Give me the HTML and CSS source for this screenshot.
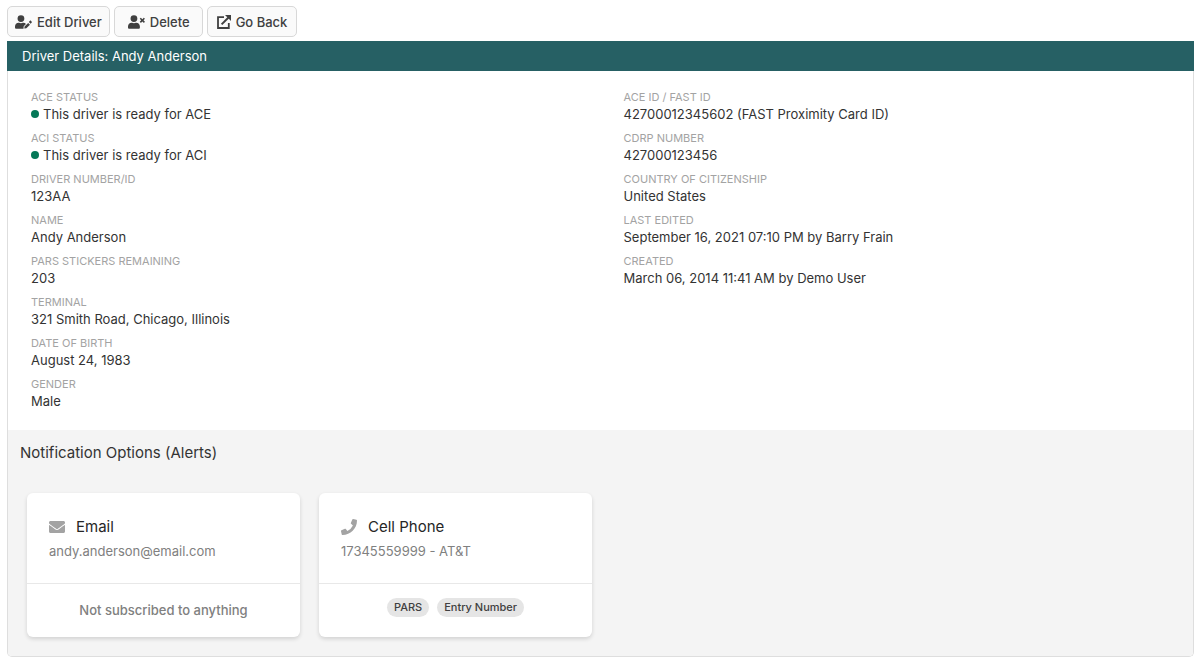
FILE: index.html
```html
<!DOCTYPE html>
<html lang="en">
<head>
    <meta charset="UTF-8">
    <meta name="viewport" content="width=device-width, initial-scale=1.0">
    <title>Driver Details</title>
    <link rel="stylesheet" href="styles.css">
</head>
<body>

    <!-- Toolbar -->
    <div class="toolbar">
        <button type="button" class="btn">
            <svg class="icon-user" viewBox="0 0 640 512" aria-hidden="true"><path d="M224 256a128 128 0 1 0 0-256 128 128 0 1 0 0 256zm90 32h-17a174 174 0 0 1-146 0h-17C60 288 0 348 0 422v42c0 27 21 48 48 48h277c-4-9-6-18-5-28l7-61 1-11 8-8 77-77c-24-24-59-39-99-39zm45 139l-7 61c-1 8 6 15 14 14l61-7 137-137-68-68-137 137zm271-185l-32-32c-10-10-26-10-36 0l-43 43 68 68 43-43c10-10 10-26 0-36z"/></svg>
            Edit Driver
        </button>
        <button type="button" class="btn btn-delete">
            <svg class="icon-user" viewBox="0 0 640 512" aria-hidden="true"><path d="M224 256a128 128 0 1 0 0-256 128 128 0 1 0 0 256zm90 32h-17a174 174 0 0 1-146 0h-17C60 288 0 348 0 422v42c0 27 21 48 48 48h352c27 0 48-21 48-48v-42c0-74-60-134-134-134zm270-96l46-46c6-6 6-13 0-19l-25-25c-6-6-13-6-19 0l-46 46-46-46c-6-6-13-6-19 0l-25 25c-6 6-6 13 0 19l46 46-46 46c-6 6-6 13 0 19l25 25c6 6 13 6 19 0l46-46 46 46c6 6 13 6 19 0l25-25c6-6 6-13 0-19z"/></svg>
            Delete
        </button>
        <button type="button" class="btn btn-back">
            <svg class="icon-square" viewBox="0 0 14 14" aria-hidden="true"><path d="M7 2.200H1V13h10.800V8" fill="none" stroke="currentColor" stroke-width="1.800"/><path d="M4.600 9.400L11.500 2.500" stroke="currentColor" stroke-width="2"/><path d="M8 0h6v6z"/></svg>
            Go Back
        </button>
    </div>

    <!-- Driver panel -->
    <div class="panel">
        <h1 class="panel-header">Driver Details: Andy Anderson</h1>

        <div class="details">
            <dl class="detail-list">
                <div class="detail"><dt>ACE STATUS</dt><dd><span class="dot"></span>This driver is ready for ACE</dd></div>
                <div class="detail"><dt>ACI STATUS</dt><dd><span class="dot"></span>This driver is ready for ACI</dd></div>
                <div class="detail"><dt>DRIVER NUMBER/ID</dt><dd>123AA</dd></div>
                <div class="detail"><dt>NAME</dt><dd>Andy Anderson</dd></div>
                <div class="detail"><dt>PARS STICKERS REMAINING</dt><dd>203</dd></div>
                <div class="detail"><dt>TERMINAL</dt><dd>321 Smith Road, Chicago, Illinois</dd></div>
                <div class="detail"><dt>DATE OF BIRTH</dt><dd>August 24, 1983</dd></div>
                <div class="detail"><dt>GENDER</dt><dd>Male</dd></div>
            </dl>
            <dl class="detail-list">
                <div class="detail"><dt>ACE ID / FAST ID</dt><dd>42700012345602 (FAST Proximity Card ID)</dd></div>
                <div class="detail"><dt>CDRP NUMBER</dt><dd>427000123456</dd></div>
                <div class="detail"><dt>COUNTRY OF CITIZENSHIP</dt><dd>United States</dd></div>
                <div class="detail"><dt>LAST EDITED</dt><dd>September 16, 2021 07:10 PM by Barry Frain</dd></div>
                <div class="detail"><dt>CREATED</dt><dd>March 06, 2014 11:41 AM by Demo User</dd></div>
            </dl>
        </div>

        <!-- Alerts -->
        <section class="alerts">
            <h2>Notification Options (Alerts)</h2>
            <div class="cards">
                <div class="card">
                    <div class="card-body">
                        <h3>
                            <svg class="card-icon" viewBox="0 0 512 512" aria-hidden="true"><path d="M502 191c4-3 10 0 10 5v204c0 27-21 48-48 48H48c-27 0-48-21-48-48V196c0-5 6-8 10-5 22 17 52 40 155 114 21 15 57 48 91 48s70-33 91-48c103-74 133-97 155-114zM256 320c23 0 57-30 74-42 133-97 143-105 173-128 6-5 9-12 9-19v-19c0-27-21-48-48-48H48c-27 0-48 21-48 48v19c0 7 3 14 9 19 30 23 40 31 173 128 17 12 51 42 74 42z"/></svg>
                            Email
                        </h3>
                        <p>andy.anderson@email.com</p>
                    </div>
                    <div class="card-footer">
                        <span class="empty">Not subscribed to anything</span>
                    </div>
                </div>
                <div class="card">
                    <div class="card-body">
                        <h3>
                            <svg class="card-icon" viewBox="0 0 512 512" aria-hidden="true"><path d="M493 25L389 1c-11-3-23 3-27 14l-48 112c-4 10-1 22 7 28l60 50a371 371 0 0 1-177 177l-50-60c-6-8-18-11-28-7L14 363c-11 4-17 16-14 27l24 104c3 11 12 18 24 18 256 0 464-207 464-464 0-12-8-21-19-23z"/></svg>
                            Cell Phone
                        </h3>
                        <p>17345559999 - AT&amp;T</p>
                    </div>
                    <div class="card-footer">
                        <span class="tag">PARS</span>
                        <span class="tag">Entry Number</span>
                    </div>
                </div>
            </div>
        </section>
    </div>

</body>
</html>
```
FILE: styles.css
```css
* {
    box-sizing: border-box;
}

body {
    margin: 0;
    padding: 6px 6px 5px 7px;
    font-family: Inter, "Liberation Sans", sans-serif;
    font-size: 13px;
    color: #333;
    background-color: #fff;
}

h1, h2, h3, p, dl, dd {
    margin: 0;
    font-weight: 400;
}

/* Toolbar */
.toolbar {
    display: flex;
    gap: 4px;
    margin-bottom: 4px;
}

.btn {
    display: flex;
    align-items: center;
    gap: 5px;
    height: 31px;
    padding: 0 7px;
    border: 1px solid #d8d8d8;
    border-radius: 5px;
    background-color: #fafafa;
    color: #404040;
    font-family: inherit;
    font-size: 13px;
    font-weight: 500;
    cursor: pointer;
}

.btn:hover {
    background-color: #f0f0f0;
}

.btn-delete {
    padding: 0 12px 0 13px;
}

.btn-back {
    padding: 0 9px;
}

.btn svg {
    fill: currentColor;
}

.icon-user {
    width: 17px;
    height: 14px;
}

.icon-square {
    width: 14px;
    height: 14px;
}

/* Panel */
.panel {
    border: 1px solid #dedede;
    border-top: 0;
    border-radius: 0 0 5px 5px;
}

.panel-header {
    margin: 0 -1px;
    padding: 0 15px;
    background-color: #266064;
    color: #fff;
    font-size: 13px;
    line-height: 30px;
}

.details {
    display: grid;
    grid-template-columns: 1fr 1fr;
    padding: 18px 0 20px;
}

.detail-list {
    display: flex;
    flex-direction: column;
    gap: 7px;
    padding: 0 23px;
}

.detail dt {
    color: #a3a3a3;
    font-size: 11px;
    line-height: 16px;
}

.detail dd {
    line-height: 18px;
}

.dot {
    display: inline-block;
    width: 8px;
    height: 8px;
    margin-right: 4px;
    border-radius: 50%;
    background-color: #047857;
    vertical-align: 1px;
}

/* Alerts */
.alerts {
    padding: 12px 12px 19px;
    border-radius: 0 0 4px 4px;
    background-color: #f4f4f4;
}

.alerts h2 {
    font-size: 15px;
    line-height: 22px;
}

.cards {
    display: flex;
    flex-wrap: wrap;
    gap: 19px;
    margin: 29px 7px 0;
}

.card {
    width: 273px;
    border-radius: 6px;
    background-color: #fff;
    box-shadow: 0 2px 4px rgba(0, 0, 0, 0.14);
}

.card-body {
    padding: 22px 22px 20px;
    border-bottom: 1px solid #e8e8e8;
}

.card h3 {
    display: flex;
    align-items: center;
    gap: 11px;
    color: #262626;
    font-size: 15px;
    line-height: 24px;
}

.card p {
    color: #808080;
    line-height: 24px;
}

.card-icon {
    width: 16px;
    height: 16px;
    fill: #a3a3a3;
}

.card-footer {
    display: flex;
    justify-content: center;
    gap: 8px;
    padding: 14px 22px 20px;
}

.empty {
    margin-bottom: -5px;
    color: #808080;
    font-weight: 500;
    line-height: 24px;
}

.tag {
    padding: 0 7px;
    border-radius: 10px;
    background-color: #e5e5e5;
    color: #404040;
    font-size: 11px;
    font-weight: 500;
    line-height: 19px;
}
```
